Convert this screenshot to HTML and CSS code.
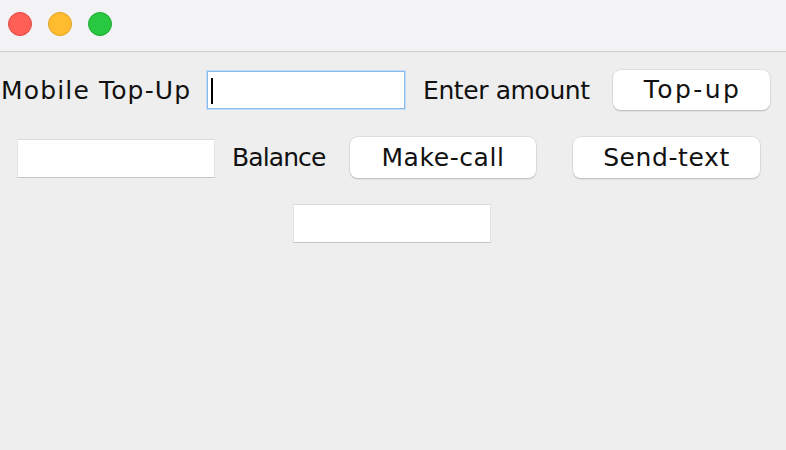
FILE: index.html
```html
<!DOCTYPE html>
<html>
<head>
<meta charset="utf-8">
<link rel="stylesheet" href="styles.css">
</head>
<body>
<div class="window">
  <div class="titlebar">
    <span class="light red"></span>
    <span class="light yellow"></span>
    <span class="light green"></span>
  </div>
  <div class="content">
    <div class="row row1">
      <span class="label l-mobile">Mobile Top-Up</span>
      <div class="field focused"><span class="caret"></span></div>
      <span class="label l-amount">Enter amount</span>
      <button class="btn b-topup">Top-up</button>
    </div>
    <div class="row row2">
      <div class="field f-balance"></div>
      <span class="label l-balance">Balance</span>
      <button class="btn b-call">Make-call</button>
      <button class="btn b-text">Send-text</button>
    </div>
    <div class="row row3">
      <div class="field"></div>
    </div>
  </div>
</div>
</body>
</html>
```

FILE: styles.css
```css
html, body {
  margin: 0;
  padding: 0;
  width: 786px;
  height: 450px;
  overflow: hidden;
}
body {
  font-family: "DejaVu Sans", "Liberation Sans", sans-serif;
  color: #111;
}
.window {
  width: 786px;
  height: 450px;
  display: flex;
  flex-direction: column;
  background: #eeeeee;
}
.titlebar {
  height: 52px;
  background: #f3f3f5;
  border-bottom: 1px solid #cfcfd1;
  display: flex;
  align-items: flex-start;
  padding-left: 8px;
  padding-top: 12px;
  gap: 16px;
  box-sizing: border-box;
  flex-shrink: 0;
}
.light {
  width: 24px;
  height: 24px;
  border-radius: 50%;
  box-sizing: border-box;
  flex-shrink: 0;
}
.red { background: #ff5f57; border: 1px solid #e3473f; }
.yellow { background: #febc2e; border: 1px solid #e0a11b; }
.green { background: #28c840; border: 1px solid #1caa2e; }
.content {
  flex: 1;
  display: flex;
  flex-direction: column;
}
.row {
  display: flex;
  align-items: center;
}
.row > * { flex-shrink: 0; }
.row1 { margin-top: 18px; height: 40px; }
.row2 { margin-top: 27px; height: 41px; padding-left: 17px; }
.row3 { margin-top: 26px; height: 38px; justify-content: center; padding-right: 2px; }
.label {
  font-size: 25px;
  line-height: 30px;
  white-space: nowrap;
}
.row1 .label { padding-top: 2px; }
.l-mobile { width: 207px; padding-left: 1px; box-sizing: border-box; letter-spacing: 1.15px; }
.l-amount { width: 208px; padding-left: 18px; box-sizing: border-box; letter-spacing: -0.4px; }
.l-balance { width: 135px; padding-left: 17px; box-sizing: border-box; letter-spacing: -0.9px; }
.field {
  width: 198px;
  height: 38px;
  background: #fff;
  box-sizing: border-box;
  border-top: 1px solid #dcdcdc;
  border-left: 1px solid #e4e4e4;
  border-right: 1px solid #e4e4e4;
  box-shadow: 0 1px 0 #c4c4c4;
  position: relative;
}
.field.focused {
  border: 1px solid #8ab9ec;
  box-shadow: 0 0 0 1px #c4dcf7;
}
.caret {
  position: absolute;
  left: 3px;
  top: 6px;
  width: 2px;
  height: 26px;
  background: #000;
}
.btn {
  font-family: "DejaVu Sans", "Liberation Sans", sans-serif;
  font-size: 25px;
  color: #111;
  background: #fff;
  border: none;
  border-radius: 8px;
  box-shadow: 0 0 0 0.5px #cfcfcf, 0 1px 1.5px rgba(0,0,0,0.28);
  height: 40px;
  padding: 0;
  margin: 0;
  line-height: 38px;
  text-align: center;
  letter-spacing: 0.6px;
}
.b-topup { width: 157px; letter-spacing: 2.4px; text-indent: 2px; }
.b-call { width: 186px; height: 41px; }
.b-text { width: 187px; height: 41px; margin-left: 37px; }
```
